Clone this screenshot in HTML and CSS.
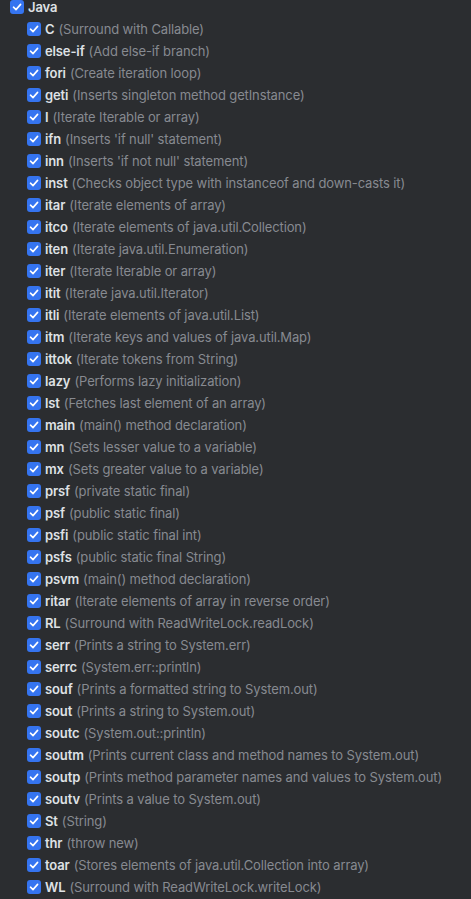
FILE: index.html
```html
<!DOCTYPE html>
<html lang="en">
<head>
    <meta charset="UTF-8">
    <title>Live Templates - Java</title>
    <link rel="stylesheet" href="styles.css">
</head>
<body>
    <div class="tree">
        <div class="row group">
            <span class="check"><svg viewBox="0 0 14 14"><path d="M3.5 7.2 L6 9.6 L10.6 4.4"/></svg></span>
            <span class="name">Java</span>
        </div>
        <div id="items"></div>
    </div>

    <script>
        const templates = [
            ['C', 'Surround with Callable'],
            ['else-if', 'Add else-if branch'],
            ['fori', 'Create iteration loop'],
            ['geti', 'Inserts singleton method getInstance'],
            ['I', 'Iterate Iterable or array'],
            ['ifn', "Inserts 'if null' statement"],
            ['inn', "Inserts 'if not null' statement"],
            ['inst', 'Checks object type with instanceof and down-casts it'],
            ['itar', 'Iterate elements of array'],
            ['itco', 'Iterate elements of java.util.Collection'],
            ['iten', 'Iterate java.util.Enumeration'],
            ['iter', 'Iterate Iterable or array'],
            ['itit', 'Iterate java.util.Iterator'],
            ['itli', 'Iterate elements of java.util.List'],
            ['itm', 'Iterate keys and values of java.util.Map'],
            ['ittok', 'Iterate tokens from String'],
            ['lazy', 'Performs lazy initialization'],
            ['lst', 'Fetches last element of an array'],
            ['main', 'main() method declaration'],
            ['mn', 'Sets lesser value to a variable'],
            ['mx', 'Sets greater value to a variable'],
            ['prsf', 'private static final'],
            ['psf', 'public static final'],
            ['psfi', 'public static final int'],
            ['psfs', 'public static final String'],
            ['psvm', 'main() method declaration'],
            ['ritar', 'Iterate elements of array in reverse order'],
            ['RL', 'Surround with ReadWriteLock.readLock'],
            ['serr', 'Prints a string to System.err'],
            ['serrc', 'System.err::println'],
            ['souf', 'Prints a formatted string to System.out'],
            ['sout', 'Prints a string to System.out'],
            ['soutc', 'System.out::println'],
            ['soutm', 'Prints current class and method names to System.out'],
            ['soutp', 'Prints method parameter names and values to System.out'],
            ['soutv', 'Prints a value to System.out'],
            ['St', 'String'],
            ['thr', 'throw new'],
            ['toar', 'Stores elements of java.util.Collection into array'],
            ['WL', 'Surround with ReadWriteLock.writeLock']
        ];

        const items = document.getElementById('items');
        const tick = '<span class="check"><svg viewBox="0 0 14 14"><path d="M3.5 7.2 L6 9.6 L10.6 4.4"/></svg></span>';

        templates.forEach(([name, desc]) => {
            const row = document.createElement('div');
            row.className = 'row item';
            row.innerHTML = `${tick}<span class="name">${name}</span><span class="desc">(${desc})</span>`;
            items.appendChild(row);
        });
    </script>
</body>
</html>
```

FILE: styles.css
```css
body {
    margin: 0;
    background-color: #2b2d30;
    font-family: Inter, "Noto Sans", sans-serif;
    font-size: 13px;
    letter-spacing: -0.12px;
    color: #dfe1e5;
    overflow: hidden;
}

.tree {
    margin-top: -4px;
}

.row {
    display: flex;
    align-items: center;
    height: 22px;
    white-space: nowrap;
}

.group {
    padding-left: 10px;
}

.item {
    padding-left: 27px;
}

.check {
    width: 14px;
    height: 14px;
    border-radius: 3px;
    background-color: #3574f0;
    margin-right: 4px;
    flex-shrink: 0;
}

.check svg {
    display: block;
    width: 14px;
    height: 14px;
}

.check path {
    fill: none;
    stroke: #ffffff;
    stroke-width: 1.6;
    stroke-linecap: round;
    stroke-linejoin: round;
}

.name {
    font-weight: 600;
    color: #dfe1e5;
}

.desc {
    margin-left: 4px;
    color: #878a90;
}
```
